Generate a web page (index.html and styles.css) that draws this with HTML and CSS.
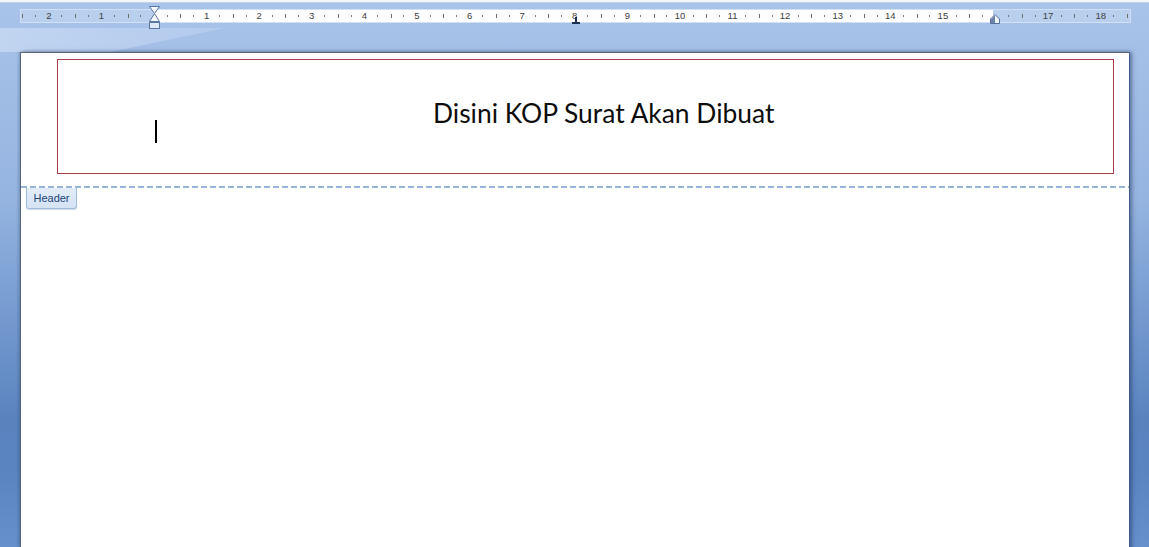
FILE: index.html
```html
<!DOCTYPE html>
<html>
<head>
<meta charset="utf-8">
<link rel="stylesheet" href="styles.css">
</head>
<body>
<div class="app">
  <div class="topline"></div>
  <div class="wedge"></div>
  <div class="ruler-bar">
    <div class="ruler">
      <div class="nums">
        <span>2</span><span>1</span><span></span><span>1</span><span>2</span><span>3</span><span>4</span><span>5</span><span>6</span><span>7</span><span>8</span><span>9</span><span>10</span><span>11</span><span>12</span><span>13</span><span>14</span><span>15</span><span></span><span>17</span><span>18</span>
      </div>
      <svg class="mk-indent" width="11" height="23" viewBox="0 0 11 23">
        <polygon points="0.5,0.5 10.5,0.5 5.5,7.5" fill="#f6f8fc" stroke="#5a76a2"/>
        <polygon points="5.5,7.5 10.5,15.5 0.5,15.5" fill="#f6f8fc" stroke="#5a76a2"/>
        <rect x="0.5" y="16.5" width="10" height="6" fill="#dfe8f5" stroke="#5a76a2"/>
      </svg>
      <svg class="mk-right" width="10" height="10" viewBox="0 0 10 10">
        <polygon points="0.5,9.5 0.5,5 5,0.5 9.5,5 9.5,9.5" fill="#eef3fa" stroke="#55709b"/>
        <polygon points="1,9 1,5.2 5,1.2 5,9" fill="#6d84a8"/>
      </svg>
      <svg class="mk-tab" width="8" height="7" viewBox="0 0 8 7">
        <rect x="3" y="0" width="2" height="5" fill="#1d3253"/>
        <rect x="0" y="5" width="8" height="2" fill="#1d3253"/>
      </svg>
    </div>
  </div>
  <div class="page">
    <div class="kop">
      <span class="caret"></span>
      <span class="kop-title">Disini KOP Surat Akan Dibuat</span>
    </div>
    <div class="dash"></div>
    <div class="hdr-tab">Header</div>
  </div>
</div>
</body>
</html>
```

FILE: styles.css
```css
html, body {
  margin: 0;
  padding: 0;
}
body {
  width: 1149px;
  height: 547px;
  overflow: hidden;
  font-family: "Liberation Sans", Arial, sans-serif;
}
.app {
  position: relative;
  width: 1149px;
  height: 547px;
  overflow: hidden;
  background: linear-gradient(to bottom,
    #a8c4ea 0px,
    #a3bfe7 60px,
    #95b4e0 200px,
    #7399cf 320px,
    #5a83be 420px,
    #5a84c0 470px,
    #6690cc 547px);
}
.topline {
  height: 2px;
  background: #f3f5f8;
  border-bottom: 1px solid #c4d2e4;
}
.wedge {
  position: absolute;
  left: 0;
  top: 28px;
  width: 230px;
  height: 24px;
  background: linear-gradient(to right, rgba(200,218,243,0.8), rgba(190,211,240,0.5));
  clip-path: polygon(0 0, 225px 0, 110px 24px, 0 24px);
}
.ruler-bar {
  position: relative;
  padding: 6px 0 0 20px;
  height: 14px;
}
.ruler {
  position: relative;
  box-sizing: border-box;
  width: 1111px;
  height: 14px;
  border: 1px solid #d3e0f3;
  background:
    repeating-linear-gradient(90deg, transparent 0 1.5px, #6e6e6e 1.5px 2.5px, transparent 2.5px 52.6px) 0 4px / 100% 4px no-repeat,
    repeating-linear-gradient(90deg, transparent 0 14.2px, #7a7a7a 14.2px 15.2px, transparent 15.2px 26.3px) 0 5px / 100% 2px no-repeat,
    linear-gradient(90deg, #b9cfee 0 133px, #ffffff 133px 972px, #b9cfee 972px);
}
.nums {
  display: flex;
  padding-left: 1.5px;
  height: 12px;
}
.nums span {
  flex: 0 0 52.6px;
  text-align: center;
  font-size: 9.5px;
  line-height: 12px;
  color: #404040;
}
.mk-indent {
  position: absolute;
  left: 128px;
  top: -4px;
}
.mk-right {
  position: absolute;
  left: 969px;
  top: 4px;
}
.mk-tab {
  position: absolute;
  left: 551px;
  top: 7px;
}
.page {
  position: relative;
  margin: 29px 0 0 20px;
  width: 1109px;
  height: 500px;
  box-sizing: border-box;
  background: #ffffff;
  border-top: 1px solid #5c6776;
  border-left: 1px solid #56657a;
  box-shadow: 1px 0 0 #3f5f8e, 3px 0 4px rgba(25,45,85,0.5), -1px 0 3px rgba(25,45,85,0.3);
}
.kop {
  box-sizing: border-box;
  margin: 6px 0 0 36px;
  width: 1057px;
  height: 115px;
  border: 1px solid #aa3a48;
  display: flex;
  align-items: flex-start;
}
.caret {
  flex: 0 0 2px;
  height: 23px;
  margin: 60px 0 0 97px;
  background: #000000;
}
.kop-title {
  margin: 38px 0 0 276px;
  font-family: Lato, "Open Sans", sans-serif;
  font-size: 26.4px;
  line-height: 30px;
  color: #0d0d0d;
  white-space: nowrap;
}
.dash {
  margin-top: 12px;
  height: 2px;
  background: repeating-linear-gradient(90deg, #9ab5da 0 6px, transparent 6px 9px);
}
.hdr-tab {
  box-sizing: border-box;
  margin-left: 5px;
  width: 51px;
  height: 21px;
  border: 1px solid #a2bbdd;
  border-top: none;
  border-radius: 0 0 3px 3px;
  background: linear-gradient(to bottom, #e3edf9, #d5e3f5);
  box-shadow: 0 1px 1px rgba(120,150,190,0.35);
  font-size: 11px;
  line-height: 21px;
  text-align: center;
  color: #22447a;
}
```
